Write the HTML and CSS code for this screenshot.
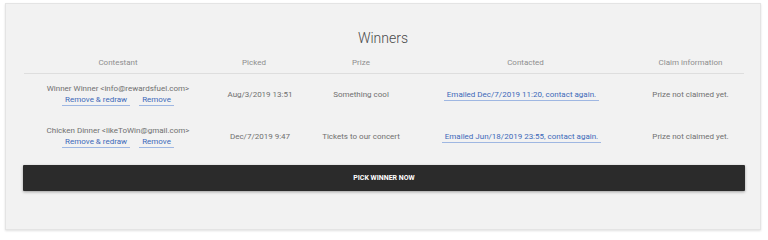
FILE: index.html
```html
<!DOCTYPE html>
<html>
<head>
<meta charset="utf-8">
<link rel="stylesheet" href="styles.css">
</head>
<body>
<div class="card">
  <h1 class="title">Winners</h1>
  <table class="winners">
    <colgroup>
      <col class="c1"><col class="c2"><col class="c3"><col class="c4"><col class="c5">
    </colgroup>
    <thead>
      <tr>
        <th>Contestant</th>
        <th class="h-picked">Picked</th>
        <th>Prize</th>
        <th>Contacted</th>
        <th>Claim information</th>
      </tr>
    </thead>
    <tbody>
      <tr>
        <td>
          <div class="name">Winner Winner &lt;info@rewardsfuel.com&gt;</div>
          <div class="actions"><a class="link">Remove &amp; redraw</a><a class="link">Remove</a></div>
        </td>
        <td>Aug/3/2019 13:51</td>
        <td>Something cool</td>
        <td class="contacted"><a class="link">Emailed Dec/7/2019 11:20, contact again.</a></td>
        <td>Prize not claimed yet.</td>
      </tr>
      <tr>
        <td>
          <div class="name">Chicken Dinner &lt;likeToWin@gmail.com&gt;</div>
          <div class="actions"><a class="link">Remove &amp; redraw</a><a class="link">Remove</a></div>
        </td>
        <td>Dec/7/2019 9:47</td>
        <td>Tickets to our concert</td>
        <td class="contacted"><a class="link">Emailed Jun/18/2019 23:55, contact again.</a></td>
        <td>Prize not claimed yet.</td>
      </tr>
    </tbody>
  </table>
  <button class="pick">PICK WINNER NOW</button>
</div>
</body>
</html>
```

FILE: styles.css
```css
html, body {
  margin: 0;
  background: #ffffff;
}
body {
  padding: 3px 6px 6px 5px;
  font-family: Roboto, "Liberation Sans", sans-serif;
}
.card {
  width: 754px;
  height: 225px;
  box-sizing: content-box;
  background: #f2f2f2;
  border: 1px solid #e4e4e4;
  box-shadow: 0 1px 2px rgba(0,0,0,0.12);
  display: flex;
  flex-direction: column;
  align-items: flex-start;
}
.title {
  align-self: stretch;
  margin: 25px 0 0 0;
  font-size: 14px;
  line-height: 18px;
  font-weight: 300;
  color: #4a4a4a;
  text-align: center;
}
.winners {
  margin-left: 18px;
  width: 720px;
  table-layout: fixed;
  border-collapse: collapse;
  font-size: 8px;
  line-height: 10px;
  color: #707070;
}
.c1 { width: 188px; }
.c2 { width: 96px; }
.c3 { width: 106px; }
.c4 { width: 223px; }
.c5 { width: 107px; }
.winners th {
  font-weight: 400;
  color: #8e8e8e;
  padding: 10px 0 5px 0;
  line-height: 11px;
  border-bottom: 1px solid #dedede;
  text-align: center;
}
.winners th.h-picked { padding-right: 12px; }
.winners td {
  text-align: center;
  vertical-align: middle;
  padding: 0;
  height: 42px;
  white-space: nowrap;
}
.winners td.contacted { padding-right: 8px; }
.actions {
  display: flex;
  justify-content: center;
  gap: 9px;
  margin-top: 1px;
}
.link {
  display: inline-block;
  color: #3d69b9;
  font-weight: 400;
  padding: 0 3px 0 3px;
  line-height: 10px;
  border-bottom: 1px solid #9fb7e2;
  cursor: pointer;
}
.pick {
  margin: 7px 0 0 17px;
  width: 722px;
  height: 26px;
  border: none;
  background: #2b2b2b;
  color: #ffffff;
  font-family: Roboto, "Liberation Sans", sans-serif;
  font-weight: 700;
  font-size: 7px;
  box-shadow: 0 1px 3px rgba(0,0,0,0.35);
  border-radius: 1px;
}
```
